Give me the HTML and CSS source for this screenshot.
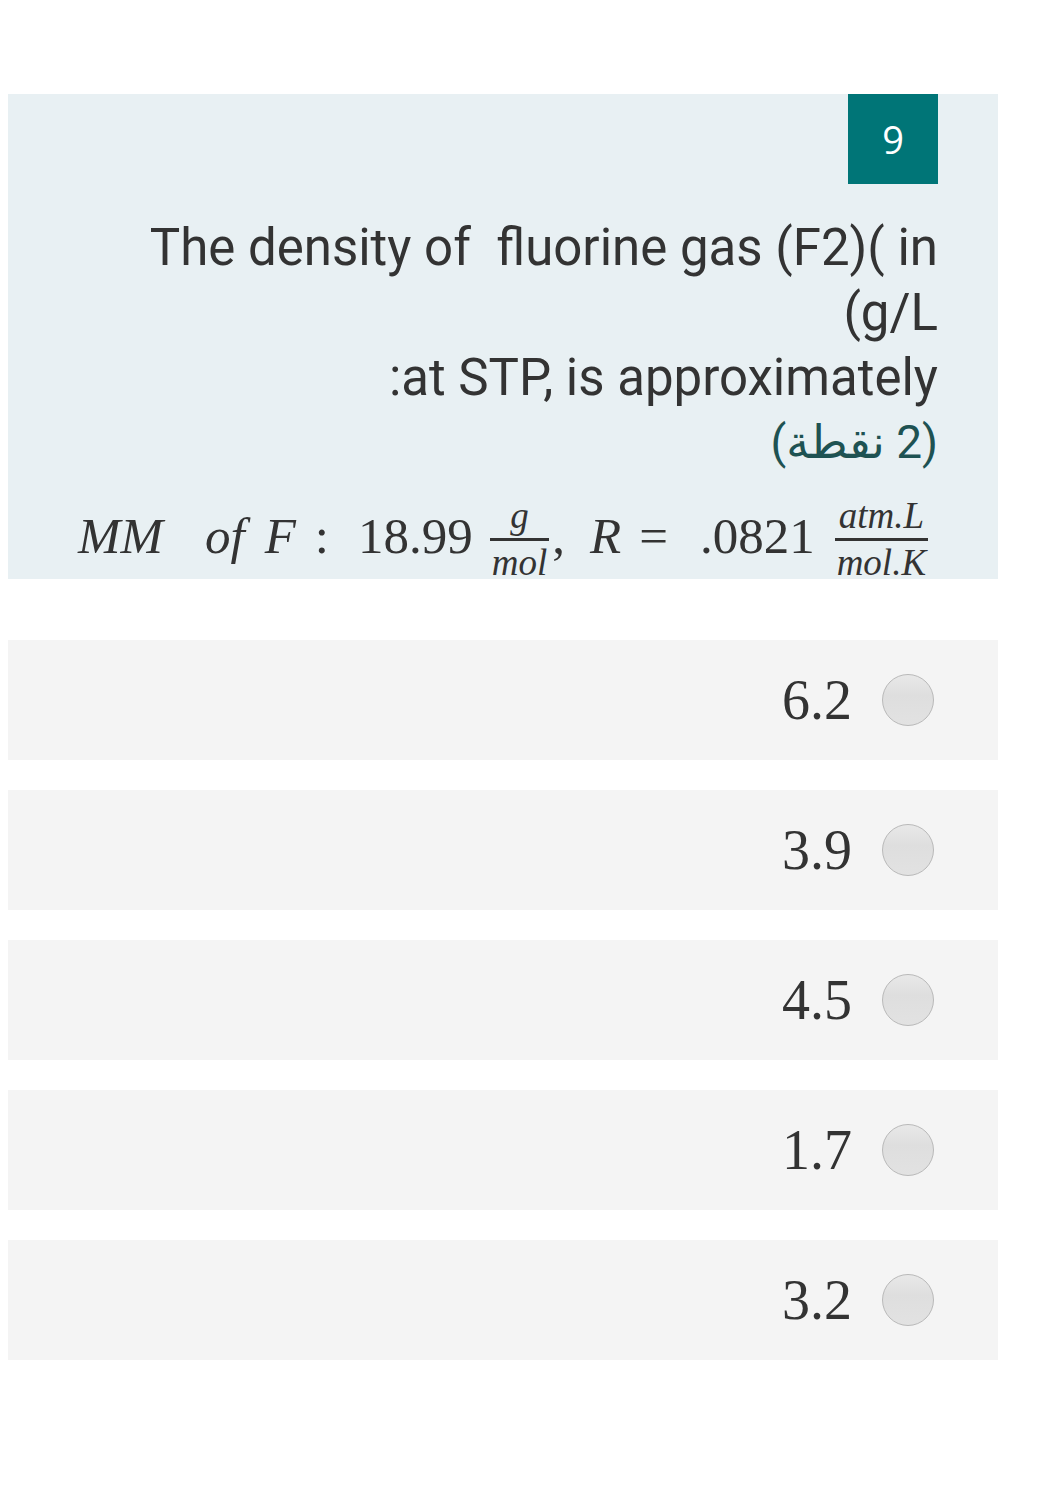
FILE: index.html
```html
<!DOCTYPE html>
<html lang="en">
<head>
<meta charset="utf-8">
<title>Question 9</title>
<link rel="stylesheet" href="styles.css">
</head>
<body>
<div class="page">
  <section class="question">
    <div class="badge-row"><div class="badge">9</div></div>
    <div class="heading">
      <div class="line">The density of&nbsp; fluorine gas (F2)( in</div>
      <div class="line">(g/L</div>
      <div class="line">:at STP, is approximately</div>
      <div class="line points"><span dir="rtl">(2 نقطة)</span></div>
    </div>
    <div class="formula"><span class="mi mm">MM</span><span class="mi of">of</span><span class="mi f">F</span><span class="mo colon">:</span><span class="mn n1">18.99</span><span class="frac f1"><span class="num">g</span><span class="bar"></span><span class="den">mol</span></span><span class="mo comma">,</span><span class="mi r">R</span><span class="mo eq">=</span><span class="mn n2">.0821</span><span class="frac f2"><span class="num">atm.L</span><span class="bar"></span><span class="den">mol.K</span></span></div>
  </section>

  <div class="options">
    <label class="option"><span class="opt-text">6.2</span><span class="radio"></span></label>
    <label class="option"><span class="opt-text">3.9</span><span class="radio"></span></label>
    <label class="option"><span class="opt-text">4.5</span><span class="radio"></span></label>
    <label class="option"><span class="opt-text">1.7</span><span class="radio"></span></label>
    <label class="option"><span class="opt-text">3.2</span><span class="radio"></span></label>
  </div>
</div>
</body>
</html>
```

FILE: styles.css
```css
html, body {
  margin: 0;
  padding: 0;
  background: #ffffff;
}

.page {
  padding: 94px 0 0 8px;
  width: 990px;
}

.question {
  box-sizing: border-box;
  height: 485px;
  overflow: hidden;
  background: #e8f0f3;
  padding-right: 60px;
}

.badge-row {
  display: flex;
  justify-content: flex-end;
}

.badge {
  width: 90px;
  height: 90px;
  background: #007577;
  color: #ffffff;
  font-family: "Open Sans", "Noto Sans", sans-serif;
  font-size: 38px;
  display: flex;
  align-items: center;
  justify-content: center;
}

.heading {
  margin-top: 31px;
  text-align: right;
  font-family: Roboto, "DejaVu Sans", sans-serif;
  font-size: 51px;
  line-height: 65px;
  color: #333333;
}

.points {
  color: #1e5252;
  font-size: 46px;
}

.formula {
  margin-top: 23px;
  font-family: "Liberation Serif", "Times New Roman", serif;
  font-size: 51px;
  color: #333333;
  white-space: nowrap;
  padding-left: 70px;
}

.mi { font-style: italic; }

.mm { margin-right: 42px; }
.of { margin-right: 20px; }
.f { margin-right: 19px; }
.colon { margin-right: 29px; }
.n1 { margin-right: 17px; }
.comma { margin-left: 3px; margin-right: 25px; }
.r { margin-right: 18px; }
.eq { margin-right: 32px; }
.n2 { margin-right: 20px; }

.frac {
  display: inline-block;
  vertical-align: -22px;
  text-align: center;
  font-size: 37px;
  font-style: italic;
}

.frac .num,
.frac .den {
  display: block;
  line-height: 36px;
  padding: 0 2px;
}

.frac .bar {
  display: block;
  height: 3px;
  margin: 4px 0;
  background: #333333;
}

.options {
  margin-top: 61px;
  display: flex;
  flex-direction: column;
  gap: 30px;
}

.option {
  height: 120px;
  background: #f4f4f4;
  display: flex;
  align-items: center;
  justify-content: flex-end;
  padding-right: 64px;
  gap: 30px;
}

.opt-text {
  font-family: "Liberation Serif", "Times New Roman", serif;
  font-size: 56px;
  color: #333333;
}

.radio {
  box-sizing: border-box;
  width: 52px;
  height: 52px;
  border-radius: 50%;
  border: 1.5px solid #b9b9b9;
  background: linear-gradient(#e8e8e8, #dedede 40%, #e2e2e2);
}
```
